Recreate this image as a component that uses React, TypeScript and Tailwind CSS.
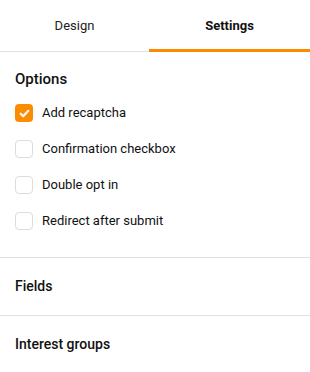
const font = { fontFamily: "Roboto, 'Liberation Sans', sans-serif" };

const options = [
  { label: "Add recaptcha", checked: true },
  { label: "Confirmation checkbox", checked: false },
  { label: "Double opt in", checked: false },
  { label: "Redirect after submit", checked: false },
];

function Checkbox({ checked }: { checked: boolean }) {
  if (checked) {
    return (
      <span className="flex h-[18px] w-[18px] items-center justify-center rounded-[4px] bg-[#fb8c00]">
        <svg width="13" height="13" viewBox="0 0 24 24" fill="none" stroke="white" strokeWidth="4" strokeLinecap="round" strokeLinejoin="round">
          <path d="M5 12.5l4.5 4.5L19 7" />
        </svg>
      </span>
    );
  }
  return <span className="h-[18px] w-[18px] rounded-[4px] border border-[#dcdcdc] bg-white" />;
}

export default function App() {
  return (
    <div className="min-h-[372px] w-[310px] bg-white text-[#111]" style={font}>
      <div className="flex h-[52px] border-b border-[#e0e0e0]">
        <button className="flex w-[149px] items-center justify-center text-[13px] text-[#222]">Design</button>
        <button className="-mb-px flex flex-1 items-center justify-center border-b-[3px] border-[#fb8c00] pt-[3px] text-[13px] font-bold text-[#111]">
          Settings
        </button>
      </div>

      <section className="border-b border-[#e0e0e0] px-[15px] pt-[17px] pb-[18px]">
        <h2 className="text-[15px] leading-5 font-medium">Options</h2>
        <div className="mt-[6px] flex flex-col">
          {options.map((o) => (
            <label key={o.label} className="flex h-9 items-center gap-[9px] text-[13px]">
              <Checkbox checked={o.checked} />
              <span>{o.label}</span>
            </label>
          ))}
        </div>
      </section>

      <section className="border-b border-[#e0e0e0] px-[15px] pt-[18px] pb-[19px]">
        <h2 className="text-[14px] leading-5 font-medium">Fields</h2>
      </section>

      <section className="px-[15px] pt-[18px] pb-[18px]">
        <h2 className="text-[14px] leading-5 font-medium">Interest groups</h2>
      </section>
    </div>
  );
}
